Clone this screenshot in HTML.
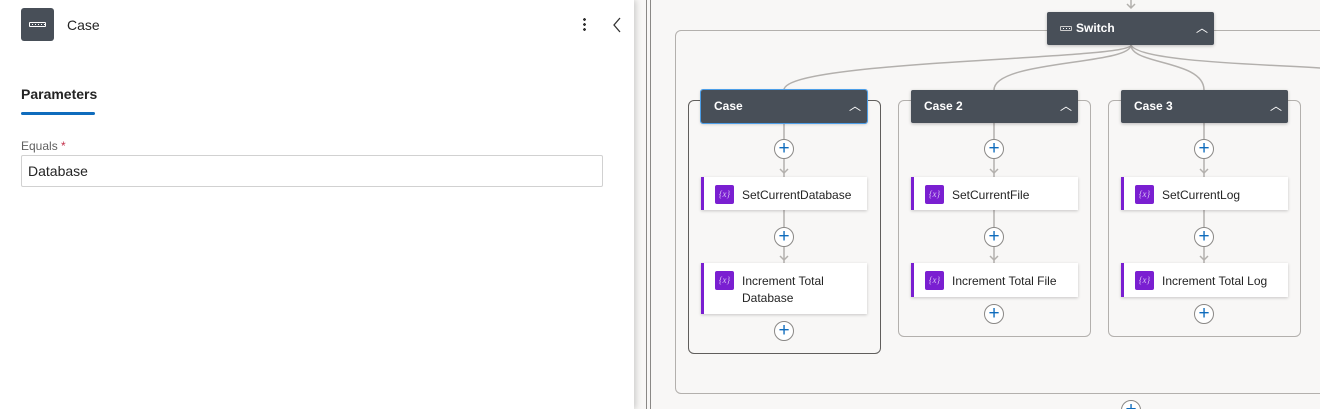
<!DOCTYPE html>
<html style="overflow:hidden;height:409px"><head><meta charset="utf-8"><style>
*{margin:0;padding:0;box-sizing:border-box}
body{width:1320px;height:409px;overflow:hidden;background:#f8f7f6;font-family:"Liberation Sans",sans-serif;color:#242424}
#wrap{position:relative;width:1320px;height:409px;overflow:hidden}
.abs{position:absolute}
.panel{left:0;top:0;width:634px;height:409px;background:#fff;box-shadow:2px 0 6px rgba(0,0,0,.18)}
.hdr{background:#484f58;color:#fff;font-size:12px;font-weight:bold;height:33px;line-height:33px;padding-left:13px;border-radius:2px;box-shadow:0 1px 3px rgba(0,0,0,.25)}
.hdr .car{position:absolute;right:6px;top:0;font-weight:normal}
.cont{border:1.5px solid #b3b0ad;border-radius:6px}
.card{background:#fff;border-left:3px solid #7a1fd1;box-shadow:0 1px 3px rgba(0,0,0,.2);font-size:12px;color:#242424}
.card .ic{position:absolute;left:11px;top:8px;width:19px;height:19px;background:#7a1fd1;border-radius:2px;color:#d9c3f3;font-size:9px;font-style:italic;text-align:center;line-height:19px;font-family:"Liberation Serif",serif}
.card .t{position:absolute;left:38px;top:10px;line-height:17px}
.plus{width:20px;height:20px;border-radius:50%;background:#fff;border:1px solid #8a8886;color:#0f6cbd;text-align:center;font-size:19px;line-height:17px}
.kb{border:1px solid #fff;border-radius:1px;background:repeating-linear-gradient(90deg,transparent 0 1px,#fff 1px 2px,transparent 2px 3px) 1px 1px/100% 1px no-repeat}
</style></head><body><div id="wrap">
<div class="abs panel">
  <div class="abs" style="left:21px;top:8px;width:33px;height:33px;background:#484f58;border-radius:3px">
    <div class="abs kb" style="left:8px;top:14px;width:17px;height:5px"></div>
  </div>
  <div class="abs" style="left:67px;top:17px;font-size:14px">Case</div>
  <div class="abs" style="left:583px;top:17px;width:3px;height:14px;background:radial-gradient(circle,#333 1.3px,transparent 1.5px) 0 0/3px 5px"></div>
  <svg class="abs" style="left:611px;top:17px" width="12" height="16"><path d="M9 1 L3 8 L9 15" stroke="#333" stroke-width="1.3" fill="none"/></svg>
  <div class="abs" style="left:21px;top:86px;font-size:14px;font-weight:bold">Parameters</div>
  <div class="abs" style="left:21px;top:112px;width:74px;height:3px;background:#0f6cbd;border-radius:2px"></div>
  <div class="abs" style="left:21px;top:139px;font-size:12px;color:#616161">Equals <span style="color:#c4314b">*</span></div>
  <div class="abs" style="left:21px;top:155px;width:582px;height:32px;border:1px solid #d1d1d1;border-radius:2px;font-size:14px;line-height:30px;padding-left:6px">Database</div>
</div>
<div class="abs" style="left:646px;top:0;width:1px;height:409px;background:#8a8886"></div>
<div class="abs" style="left:650px;top:0;width:1px;height:409px;background:#8a8886"></div>
<div class="abs cont" style="left:675px;top:30px;width:700px;height:364px"></div>
<svg class="abs" style="left:0;top:0" width="1320" height="409" fill="none" stroke="#b3b0ad" stroke-width="1.5">
<path d="M1131 0 V8 M1127 4 L1131 8 L1135 4"/>
<path d="M1131 45 C1131 60 784 60 784 90"/>
<path d="M1131 45 C1131 65 994 60 994 90"/>
<path d="M1131 45 C1131 65 1204 60 1204 90"/>
<path d="M1131 45 C1140 65 1320 65 1340 70"/>
<path d="M784 122 V177 M994 122 V177 M1204 122 V177"/>
<path d="M784 210 V263 M994 210 V263 M1204 210 V263"/>
<path d="M780 169 L784 173 L788 169 M990 169 L994 173 L998 169 M1200 169 L1204 173 L1208 169"/>
<path d="M780 256 L784 260 L788 256 M990 256 L994 260 L998 256 M1200 256 L1204 260 L1208 256"/>
</svg>
<div class="abs cont" style="left:688px;top:100px;width:193px;height:254px;border-color:#605e5c"></div>
<div class="abs cont" style="left:898px;top:100px;width:193px;height:237px"></div>
<div class="abs cont" style="left:1108px;top:100px;width:193px;height:237px"></div>
<div class="abs hdr" style="left:1047px;top:12px;width:167px"><span class="abs kb" style="left:13px;top:14px;width:12px;height:5px;border-color:#ccc"></span><span style="padding-left:16px">Switch</span><span class="car">︿</span></div>
<div class="abs hdr" style="left:701px;top:90px;width:166px;outline:1.5px solid #4c9ee8">Case<span class="car">︿</span></div>
<div class="abs hdr" style="left:911px;top:90px;width:167px">Case 2<span class="car">︿</span></div>
<div class="abs hdr" style="left:1121px;top:90px;width:167px">Case 3<span class="car">︿</span></div>
<div class="abs plus" style="left:774px;top:139px">+</div>
<div class="abs plus" style="left:984px;top:139px">+</div>
<div class="abs plus" style="left:1194px;top:139px">+</div>
<div class="abs card" style="left:701px;top:177px;width:166px;height:33px"><div class="ic">{x}</div><div class="t">SetCurrentDatabase</div></div>
<div class="abs card" style="left:911px;top:177px;width:167px;height:33px"><div class="ic">{x}</div><div class="t">SetCurrentFile</div></div>
<div class="abs card" style="left:1121px;top:177px;width:167px;height:33px"><div class="ic">{x}</div><div class="t">SetCurrentLog</div></div>
<div class="abs plus" style="left:774px;top:227px">+</div>
<div class="abs plus" style="left:984px;top:227px">+</div>
<div class="abs plus" style="left:1194px;top:227px">+</div>
<div class="abs card" style="left:701px;top:263px;width:166px;height:51px"><div class="ic">{x}</div><div class="t">Increment Total<br>Database</div></div>
<div class="abs card" style="left:911px;top:263px;width:167px;height:34px"><div class="ic">{x}</div><div class="t">Increment Total File</div></div>
<div class="abs card" style="left:1121px;top:263px;width:167px;height:34px"><div class="ic">{x}</div><div class="t">Increment Total Log</div></div>
<div class="abs plus" style="left:774px;top:321px">+</div>
<div class="abs plus" style="left:984px;top:304px">+</div>
<div class="abs plus" style="left:1194px;top:304px">+</div>
<div class="abs plus" style="left:1121px;top:400px">+</div>
</div></body></html>
